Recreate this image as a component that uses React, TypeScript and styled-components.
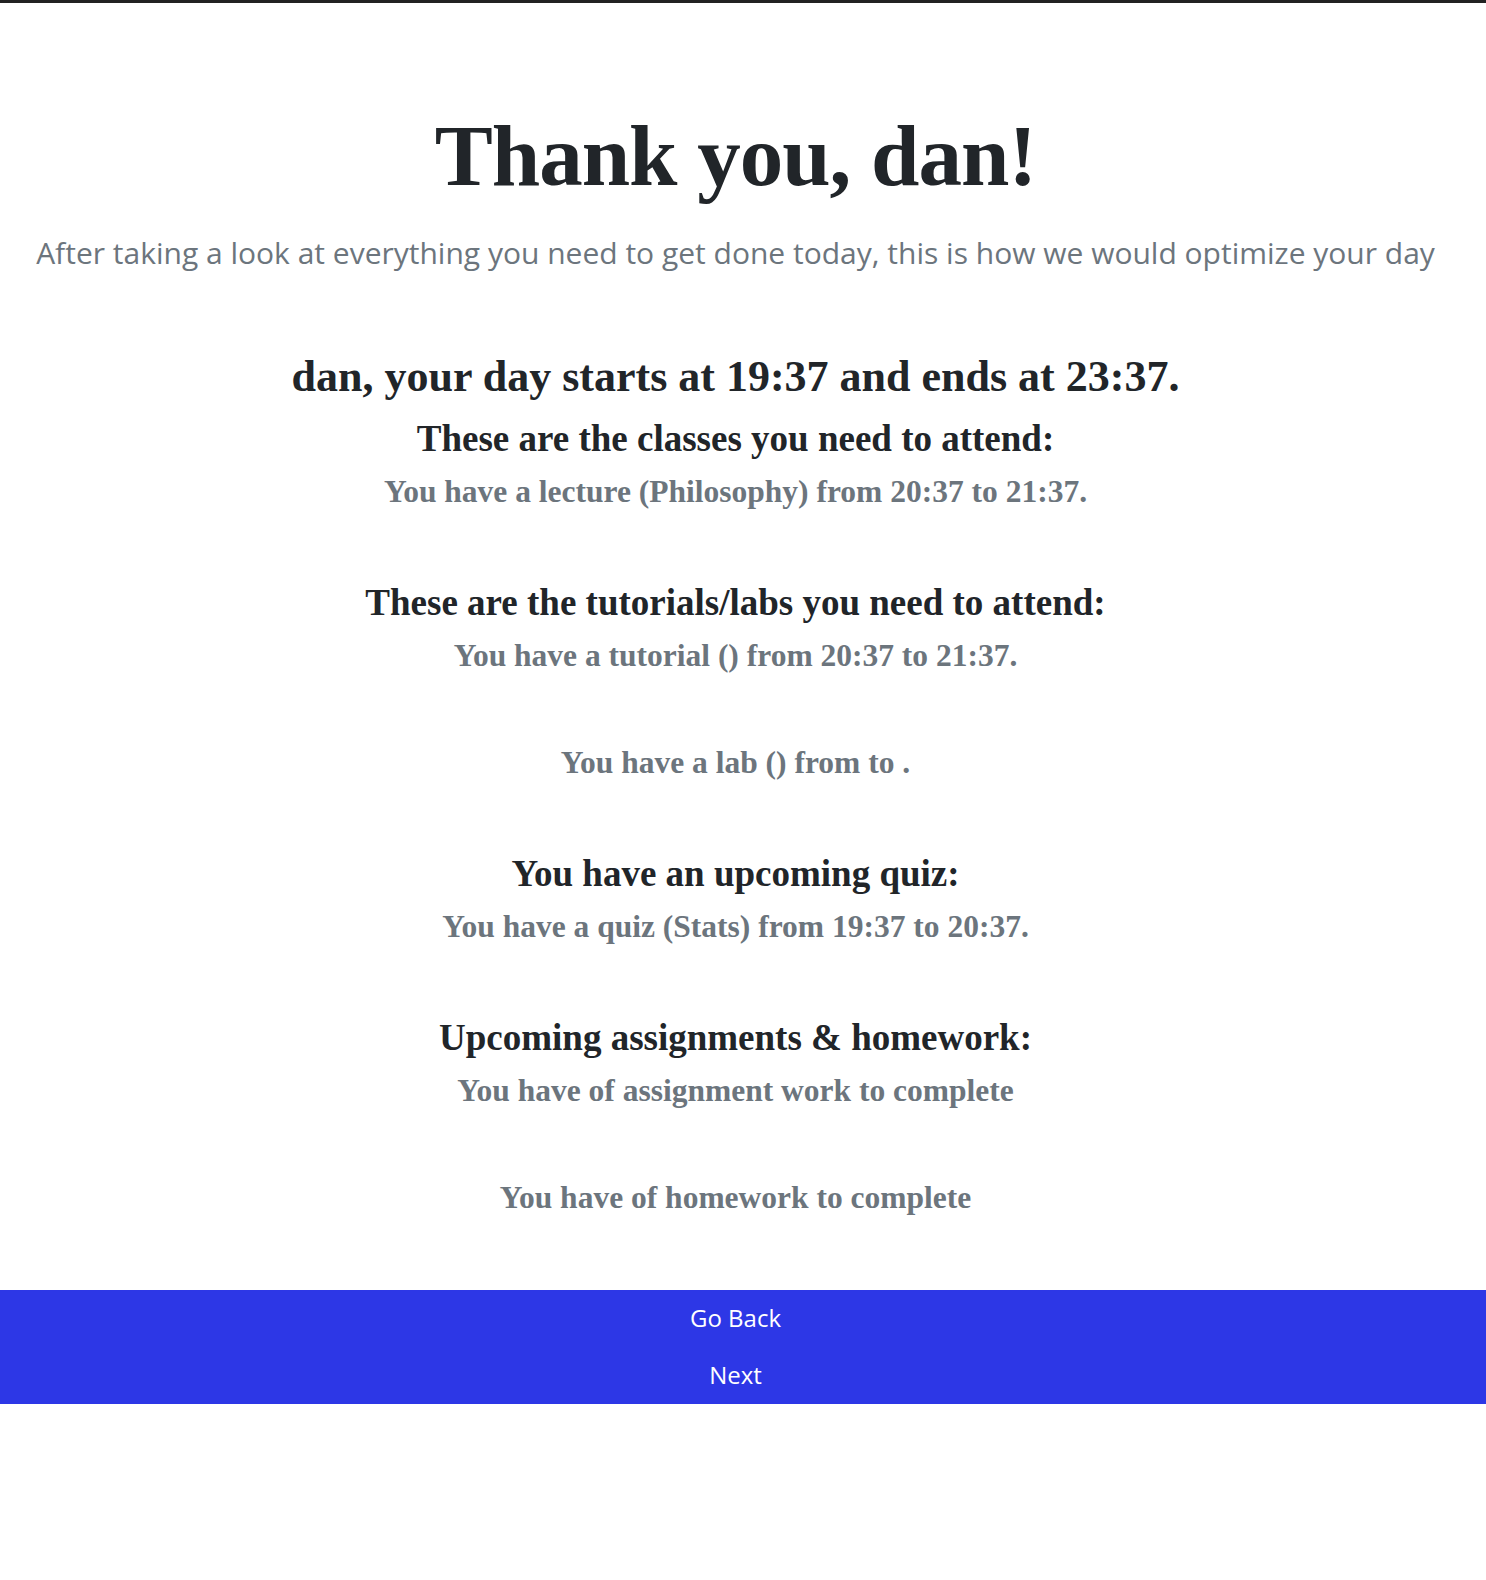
import React from 'react';
import styled, { createGlobalStyle } from 'styled-components';

const GlobalStyle = createGlobalStyle`
  html, body {
    margin: 0;
    padding: 0;
    background: #fff;
  }
  body {
    border-top: 3px solid #222;
    font-family: "Open Sans", "Liberation Sans", sans-serif;
  }
`;

const Page = styled.main`
  display: flex;
  flex-direction: column;
  align-items: center;
  text-align: center;
  padding-right: 15px;
`;

const Header = styled.header`
  padding-top: 100px;
  display: flex;
  flex-direction: column;
  align-items: center;
`;

const Title = styled.h1`
  margin: 0;
  font-family: "Liberation Serif", serif;
  font-weight: 700;
  font-size: 87px;
  line-height: 106px;
  color: #212529;
  letter-spacing: -1px;
`;

const Lead = styled.p`
  margin: 24px 0 0;
  font-family: "Open Sans", "Liberation Sans", sans-serif;
  font-size: 30px;
  line-height: 40px;
  color: #6c757d;
  white-space: nowrap;
`;

const Plan = styled.section`
  margin-top: 80px;
  display: flex;
  flex-direction: column;
  align-items: center;
`;

const Intro = styled.h2`
  margin: 0 0 18px;
  font-family: "Liberation Serif", serif;
  font-weight: 700;
  font-size: 44px;
  line-height: 48px;
  color: #212529;
`;

const Heading = styled.h3`
  margin: 0 0 13px;
  font-family: "Liberation Serif", serif;
  font-weight: 700;
  font-size: 37px;
  line-height: 40px;
  color: #212529;

  p + & {
    margin-top: 4px;
  }
`;

const Item = styled.p`
  margin: 0 0 67px;
  font-family: "Liberation Serif", serif;
  font-weight: 700;
  font-size: 31.5px;
  line-height: 40px;
  color: #6c757d;
`;

const Actions = styled.nav`
  margin-top: 5px;
  margin-right: -15px;
  align-self: stretch;
  display: flex;
  flex-direction: column;
  background: #2d37e6;
`;

const ActionButton = styled.button`
  height: 57px;
  padding: 0 15px 2px 0;
  border: none;
  background: #2d37e6;
  color: #fff;
  font-family: "Open Sans", "Liberation Sans", sans-serif;
  font-size: 24px;
  cursor: pointer;
`;

const sections = [
  {
    heading: 'These are the classes you need to attend:',
    items: ['You have a lecture (Philosophy) from 20:37 to 21:37.'],
  },
  {
    heading: 'These are the tutorials/labs you need to attend:',
    items: ['You have a tutorial () from 20:37 to 21:37.', 'You have a lab () from to .'],
  },
  {
    heading: 'You have an upcoming quiz:',
    items: ['You have a quiz (Stats) from 19:37 to 20:37.'],
  },
  {
    heading: 'Upcoming assignments & homework:',
    items: ['You have of assignment work to complete', 'You have of homework to complete'],
  },
];

const App = () => {
  return (
    <>
      <GlobalStyle />
      <Page>
        <Header>
          <Title>Thank you, dan!</Title>
          <Lead>
            After taking a look at everything you need to get done today, this is how we would optimize your day
          </Lead>
        </Header>
        <Plan>
          <Intro>dan, your day starts at 19:37 and ends at 23:37.</Intro>
          {sections.map((s) => (
            <React.Fragment key={s.heading}>
              <Heading>{s.heading}</Heading>
              {s.items.map((it) => (
                <Item key={it}>{it}</Item>
              ))}
            </React.Fragment>
          ))}
        </Plan>
        <Actions>
          <ActionButton>Go Back</ActionButton>
          <ActionButton>Next</ActionButton>
        </Actions>
      </Page>
    </>
  );
};

export default App;
